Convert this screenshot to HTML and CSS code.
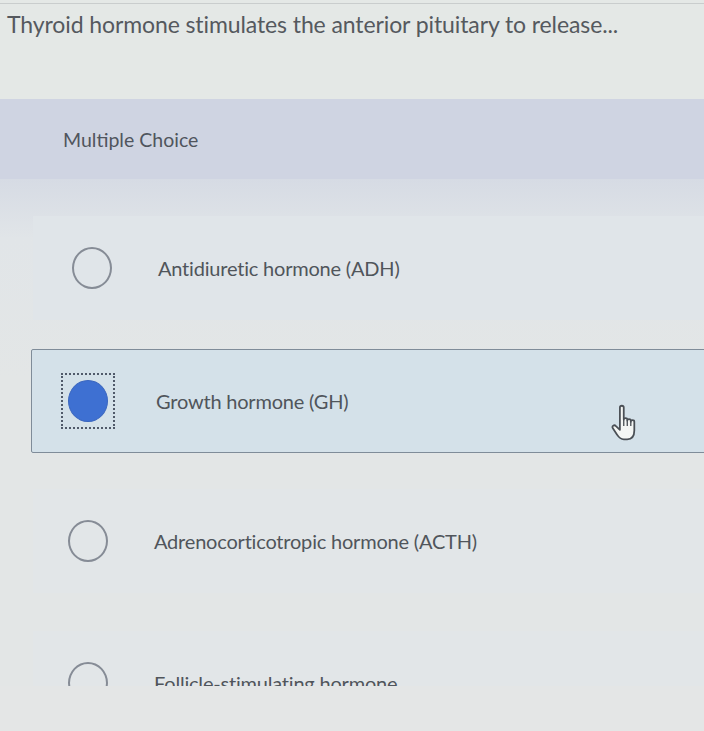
FILE: index.html
```html
<!DOCTYPE html>
<html lang="en">
<head>
  <meta charset="UTF-8">
  <meta name="viewport" content="width=device-width, initial-scale=1.0">
  <title>Question</title>
  <link rel="stylesheet" href="styles.css">
</head>
<body>
  <div class="question">
    <p class="prompt">Thyroid hormone stimulates the anterior pituitary to release...</p>
  </div>

  <div class="type-bar">
    <span>Multiple Choice</span>
  </div>

  <div class="choices">
    <label class="choice">
      <span class="radio"></span>
      <span class="choice-text">Antidiuretic hormone (ADH)</span>
    </label>
    <label class="choice selected">
      <span class="radio-focus"><span class="radio checked"></span></span>
      <span class="choice-text">Growth hormone (GH)</span>
      <svg class="cursor" width="33" height="46" viewBox="0 0 30 40">
        <path d="M9 4c0-2 3.5-2 3.5 0v11c0-1.8 3.2-1.8 3.2 0v1c0-1.8 3.2-1.8 3.2 0v1c0-1.8 3.2-1.8 3.2 0v8c0 5-2.5 8-6.5 8h-3c-3 0-4.5-1.5-6-4l-4-6c-1.2-2 1.2-3.8 2.8-2l3.6 3.4z" fill="#f4f6f4" stroke="#4a4f55" stroke-width="1.6" stroke-linejoin="round"/>
        <path d="M12.5 15v6M15.7 16v5M18.9 17v4" stroke="#4a4f55" stroke-width="1.2"/>
      </svg>
    </label>
    <label class="choice lower">
      <span class="radio"></span>
      <span class="choice-text">Adrenocorticotropic hormone (ACTH)</span>
    </label>
    <label class="choice lower">
      <span class="radio"></span>
      <span class="choice-text">Follicle-stimulating hormone</span>
    </label>
  </div>

  <div class="footer-cover"></div>
</body>
</html>
```

FILE: styles.css
```css
body {
  margin: 0;
  padding: 0;
  font-family: Lato, "Open Sans", sans-serif;
  background-color: #e4e8e6;
  color: #545a60;
  overflow: hidden;
  height: 731px;
}
.question {
  border-top: 1px solid #c9cdcd;
  margin-top: 3px;
  height: 95px;
}
.prompt {
  margin: 0;
  padding: 6px 0 0 7px;
  font-size: 23px;
  letter-spacing: -0.1px;
  color: #55595e;
}
.type-bar {
  background-color: #cfd4e2;
  height: 80px;
  display: flex;
  align-items: center;
  padding-left: 63px;
  font-size: 19.5px;
  color: #50555d;
}
.choices {
  display: flex;
  flex-direction: column;
  gap: 29px;
  padding: 37px 0 0 33px;
  background: linear-gradient(#d6dbe4, #e1e5e8 60px, #e3e6e6 200px);
}
.choice {
  box-sizing: border-box;
  display: flex;
  align-items: center;
  height: 104px;
  margin-right: -10px;
  padding-left: 38px;
  background-color: #e0e5e9;
  border: 1px solid transparent;
  position: relative;
}
.choice.lower {
  padding-left: 34px;
  background-color: #e2e6e8;
}
.choice.lower:last-child {
  margin-top: 9px;
}
.choice.selected {
  background-color: #d4e1e9;
  border-color: #7f8c99;
  border-radius: 2px;
  padding-left: 29px;
  margin-left: -2px;
  margin-bottom: 7px;
}
.radio {
  width: 36px;
  height: 38px;
  border: 2px solid #868c96;
  border-radius: 50%;
  flex-shrink: 0;
}
.radio.checked {
  background-color: #3e70d2;
  border-color: #3a66bf;
  width: 38px;
  height: 40px;
  border-width: 1px;
}
.radio-focus {
  border: 2px dotted #505a6a;
  padding: 5px;
  display: flex;
}
.choice-text {
  margin-left: 46px;
  font-size: 20px;
  letter-spacing: -0.2px;
  color: #50555b;
}
.choice.selected .choice-text {
  margin-left: 41px;
}
.cursor {
  position: absolute;
  left: 578px;
  top: 52px;
}
.footer-cover {
  position: fixed;
  left: 0;
  right: 0;
  top: 686px;
  bottom: 0;
  background-color: #e4e6e6;
}
```
